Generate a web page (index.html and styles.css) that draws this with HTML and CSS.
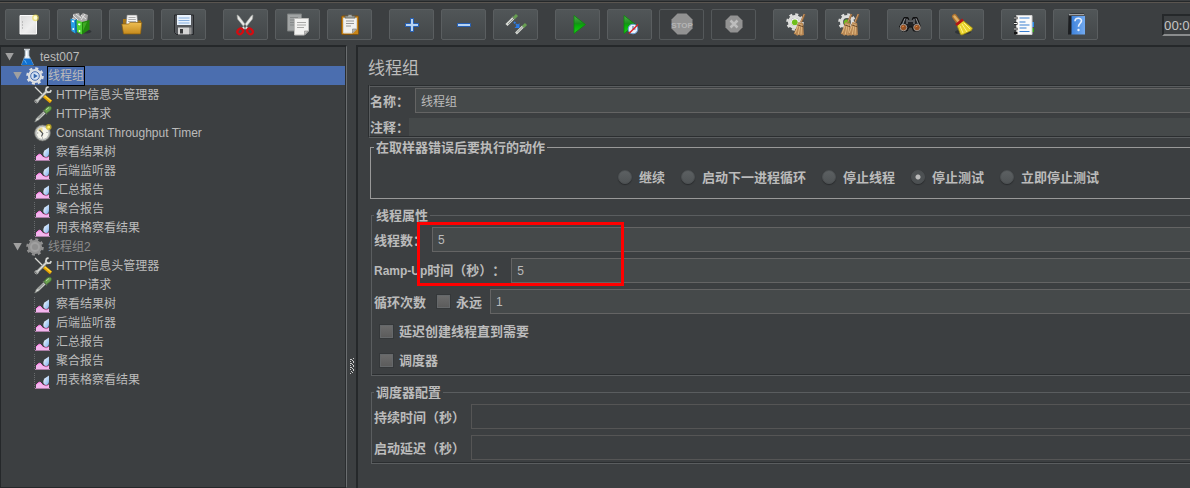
FILE: index.html
```html
<!DOCTYPE html>
<html lang="zh-CN">
<head>
<meta charset="utf-8">
<title>线程组</title>
<link rel="stylesheet" href="styles.css">
</head>
<body>
<svg class="defs" aria-hidden="true">
  <defs>
    <linearGradient id="g-green" x1="0" y1="0" x2="0" y2="1"><stop offset="0" stop-color="#4fae4a"/><stop offset=".45" stop-color="#17901a"/><stop offset=".55" stop-color="#08ac08"/><stop offset="1" stop-color="#18d218"/></linearGradient>
    <linearGradient id="g-folder" x1="0" y1="0" x2="0" y2="1"><stop offset="0" stop-color="#edbd52"/><stop offset="1" stop-color="#c58a1c"/></linearGradient>
    <linearGradient id="g-blue" x1="0" y1="0" x2="1" y2="0"><stop offset="0" stop-color="#3f83dc"/><stop offset="1" stop-color="#72aaf0"/></linearGradient>
    <linearGradient id="g-paper" x1="0" y1="0" x2="1" y2="1"><stop offset="0" stop-color="#d8d8d8"/><stop offset=".6" stop-color="#efefef"/><stop offset="1" stop-color="#dcdcdc"/></linearGradient>
    <linearGradient id="g-drop" x1="0" y1="0" x2="1" y2="1"><stop offset="0" stop-color="#ffffff"/><stop offset="1" stop-color="#7db2ee"/></linearGradient>
  </defs>
  <symbol id="i-tools" viewBox="0 0 18 18">
    <path d="M1 1l9 9" stroke="#d9d9d4" stroke-width="1.3"/>
    <path d="M10 10l7 6" stroke="#e3a000" stroke-width="3.4"/><path d="M10.500 9.700l6.500 5.300" stroke="#ffd73a" stroke-width="1.200"/>
    <path d="M2.500 15.500L13 5" stroke="#8f938f" stroke-width="3"/><path d="M2.500 15.500L13 5" stroke="#dcdedb" stroke-width="1.400"/>
    <path d="M14.600.9l-2 .8-.8 2.600 1.800 2.100 2.600-.4 1-1.900" fill="none" stroke="#d5d7d4" stroke-width="1.800"/>
    <path d="M14.500 3.500L16 1.500" stroke="#3c3f41" stroke-width="1.500"/>
    <circle cx="2.600" cy="15.200" r="1.700" fill="none" stroke="#b8bab7"/>
  </symbol>
  <symbol id="i-dropper" viewBox="0 0 18 18">
    <path d="M.8 17l1.700-3.800L11 5l2 2-8.500 8z" fill="#dfe2dd" stroke="#858985" stroke-width=".8"/>
    <path d="M4 13.500l6-6" stroke="#5c605c"/>
    <path d="M9 5.200l4 4" stroke="#6c706b" stroke-width="1.500"/>
    <path d="M10 5.500C12 2 14.500.8 16.300 1.200c1.700.5 1.500 2.900-.1 4.400L12.500 8.500z" fill="#6ba050" stroke="#40702f" stroke-width=".7"/>
    <path d="M12 4.800l3-2.300" stroke="#b6db9e"/>
  </symbol>
  <symbol id="i-timer" viewBox="0 0 18 18">
    <circle cx="8.500" cy="9" r="7.900" fill="#b9bcba" stroke="#73746f" stroke-width=".7"/>
    <circle cx="8.500" cy="9" r="6" fill="#f5f5ed"/><path d="M8.500 9V3.200A5.800 5.800 0 0 0 3.500 6z" fill="#e8d993"/>
    <path d="M5.500 6l3.300 3.500-1.300 3" fill="none" stroke="#55585a" stroke-width="1.200"/>
    <path d="M12.500 8.500l1 0M8.500 13.500v1M3.200 9h1" stroke="#888"/>
    <circle cx="14.700" cy="3" r="2.900" fill="#e5c81f" opacity=".7"/><circle cx="14.700" cy="3" r="1.500" fill="#fff26a"/>
  </symbol>
  <symbol id="i-chart" viewBox="0 0 18 18">
    <path d="M.5 2v16" stroke="#686b6d" stroke-dasharray="1 1"/><path d="M1 17.500h15" stroke="#aa7ea6"/>
    <path d="M2 17v-3l2-2 2-1 2 2 1.500 1 2.500.5 3-1V17z" fill="#f3b5ee"/>
    <path d="M2 14l2-2 2-1 2.500 2.500" fill="none" stroke="#ff7be6"/>
    <path d="M15 4.500L10.500 7.500c-2.200 3-1 6.500 1.300 6.500 2.400 0 3.200-2 3.200-4z" fill="url(#g-drop)"/>
    <path d="M10 13.500l2 1.500 3-1.500" fill="none" stroke="#c42a83" stroke-dasharray="1 1"/>
  </symbol>
  <symbol id="i-broom" viewBox="0 0 12 22">
    <path d="M10.800 1L7.500 9" stroke="#8f6237" stroke-width="2"/><path d="M10.500 1L7.300 8.700" stroke="#d3a370" stroke-width=".8"/>
    <path d="M5 8.500l4.500 1.300.7 11.200-3 .8-1.700-1-1.700.9L2 20.400.500 20z" fill="#b88753"/>
    <path d="M5.500 10l-3.500 9M6.800 10.500l-2 10M8 11l-.5 9.500" stroke="#e4bd85" stroke-width=".9"/>
    <path d="M4 11.300l5.700 1.900" stroke="#6b4927" stroke-width=".9"/>
  </symbol>
  <symbol id="i-cog" viewBox="0 0 18 18">
    <circle cx="9" cy="9" r="7.600" fill="none" stroke="currentColor" stroke-width="2.400" stroke-dasharray="2.990 2.980"/>
    <circle cx="9" cy="9" r="5.500" fill="none" stroke="currentColor" stroke-width="3.200"/>
  </symbol>
</svg>

<header class="toolbar" role="toolbar" aria-label="工具栏">
  <div class="group">
    <button class="tool" type="button" aria-label="新建"><svg viewBox="0 0 24 24"><path d="M4 2.500h16.500V21H4z" fill="url(#g-paper)" stroke="#fafafa"/><path d="M6 9h1M6 12h1M6 15h1" stroke="#999"/><circle cx="19.500" cy="4.800" r="3.400" fill="#ead94f" opacity=".65"/><circle cx="19.500" cy="4.800" r="2" fill="#fffbd0"/></svg></button>
    <button class="tool" type="button" aria-label="模板"><svg viewBox="0 0 24 24"><ellipse cx="17" cy="18.500" rx="6.500" ry="2" fill="#303437"/><path d="M5 1l6-1 1 3 3-3 5 2-1 7-7 2-7-4z" fill="#aaa"/><path d="M5 2l5 5M8 1l5 4M13 2l5 4M4 5l5 3M17 1l-4 6" stroke="#e4e4e4"/><path d="M2.500 5.500l5 1.500v13.500L3.500 18z" fill="#27a1e8"/><path d="M7 7l2-1v13l-1.500 1.500z" fill="#0968ae"/><path d="M8.500 7l5.500 2v12.500L9 19z" fill="#4fd136"/><path d="M14 9l7.500-2v9.500L14 21.500z" fill="#21870e"/><path d="M15 10l4-1-4 9z" fill="#3faa24"/><path d="M4 8l2 .6M10.300 11l2 .7" stroke="#fff" stroke-width="1.800"/><circle cx="5.300" cy="16" r=".9" fill="#fff"/><circle cx="11.500" cy="18" r=".9" fill="#fff"/></svg></button>
    <button class="tool" type="button" aria-label="打开"><svg viewBox="0 0 24 24"><path d="M3 9V6h5l1.500 1.500H21V20H4z" fill="#a87616"/><path d="M7 2h10l1 9.500H6z" fill="#f4f4f4" stroke="#777" stroke-width=".6"/><path d="M8.500 4.500h7M8.300 6.500h7.500M8 8.500h8" stroke="#999" stroke-width=".8"/><path d="M1.800 11h6.500L10 9.500h11.800L20.500 21H3.500z" fill="url(#g-folder)" stroke="#8b5f0e" stroke-width=".7"/></svg></button>
    <button class="tool" type="button" aria-label="保存"><svg viewBox="0 0 24 24"><path d="M2.500 2h19v19.500h-17l-2-2z" fill="#55585c" stroke="#25272a"/><path d="M5 2h14v10H5z" fill="#e9f2fc"/><path d="M6.500 5h11M6.500 7.500h11M6.500 10h11" stroke="#86aede"/><path d="M6 14.500h11.500v7H6z" fill="#d4d4d4"/><path d="M8 16h3v4.500H8z" fill="#36383a"/><path d="M18 14.500h1.500v7H18z" fill="#929292"/></svg></button>
  </div>
  <div class="group">
    <button class="tool" type="button" aria-label="剪切"><svg viewBox="0 0 24 24"><path d="M3 2c1 0 2 1 3 2.500L14 15l-2 1.500L3.500 6zM19 2c-1 0-2 1-3 2.500L8 15l2 1.500L18.500 6z" fill="#e9e9e7" stroke="#999c99" stroke-width=".6"/><circle cx="11" cy="13" r=".8" fill="#666"/><ellipse cx="6.200" cy="18.400" rx="2.500" ry="3.100" transform="rotate(42 6.200 18.400)" fill="none" stroke="#d40b10" stroke-width="2.300"/><ellipse cx="16" cy="18.400" rx="2.500" ry="3.100" transform="rotate(-42 16 18.400)" fill="none" stroke="#d40b10" stroke-width="2.300"/></svg></button>
    <button class="tool" type="button" aria-label="复制"><svg viewBox="0 0 24 24"><path d="M1.500 1h14v17h-14z" fill="#a1a4a4" stroke="#7d8080"/><path d="M4 4.500h8M4 7h8M4 9.500h8M4 12h5" stroke="#858888"/><path d="M8.500 5.500h14V18l-4 4h-10z" fill="#f2f2f0" stroke="#bdbdbb"/><path d="M11 9.500h9M11 12h9M11 14.500h7" stroke="#a8a8a6"/><path d="M22 18h-3.500v3.800z" fill="#c1c1be" stroke="#888" stroke-width=".6"/></svg></button>
    <button class="tool" type="button" aria-label="粘贴"><svg viewBox="0 0 24 24"><rect x="3.500" y="3" width="17" height="18.500" rx="1" fill="#c7851a" stroke="#83530d"/><path d="M5.500 5h13v11l-4 4h-9z" fill="#f1f1ef" stroke="#d8d8d5"/><path d="M18.500 16l-4 0v4z" fill="#b9b9b5" stroke="#777" stroke-width=".6"/><path d="M8 8h8M8 10.500h8M8 13h5" stroke="#969696"/><path d="M7 5V3h3V1.500h4V3h3v2z" fill="#a5a8a4" stroke="#5a5d59" stroke-width=".8"/></svg></button>
  </div>
  <div class="group">
    <button class="tool" type="button" aria-label="展开"><svg viewBox="0 0 24 24"><path d="M10.500 5.500h3v5h5v3h-5v5h-3v-5h-5v-3h5z" fill="#b7d3f2" stroke="#245fb5"/></svg></button>
    <button class="tool" type="button" aria-label="收起"><svg viewBox="0 0 24 24"><path d="M5.500 10.500h13v3h-13z" fill="#b7d3f2" stroke="#245fb5"/></svg></button>
    <button class="tool" type="button" aria-label="切换"><svg viewBox="0 0 24 24"><path d="M2.500 12l7.500-7.500" stroke="#d9dcd7" stroke-width="3"/><path d="M4 11l6-6" stroke="#8f938e"/><path d="M8.500 4l3 3" stroke="#53654c"/><path d="M10 5l3-3" stroke="#679e51" stroke-width="3"/><path d="M12 20.500l7-7" stroke="#d9dcd7" stroke-width="2.600"/><path d="M13 19.500l6-6" stroke="#8f938e"/><path d="M19 14l3-3" stroke="#679e51" stroke-width="3"/><path d="M10 9l4 4" stroke="#2f7be0" stroke-width="2" stroke-dasharray="2 1"/><path d="M15.500 10v5h-5z" fill="#287be9"/></svg></button>
  </div>
  <div class="group">
    <button class="tool" type="button" aria-label="启动"><svg viewBox="0 0 24 24"><path d="M8 2.500v18l11.500-9z" fill="url(#g-green)" stroke="#0c860c" stroke-width=".8"/></svg></button>
    <button class="tool" type="button" aria-label="不停顿启动"><svg viewBox="0 0 24 24"><path d="M6 2.500v18l11.500-9z" fill="url(#g-green)" stroke="#0c860c" stroke-width=".8"/><circle cx="15" cy="16" r="4.800" fill="#e9f2fb" stroke="#699ed6"/><path d="M15 13v3h2.500" fill="none" stroke="#3e618c"/><path d="M11 20.500l9-9" stroke="#df2222" stroke-width="1.500"/></svg></button>
    <button class="tool" type="button" aria-label="停止" disabled><svg viewBox="0 0 24 24"><path d="M7.500.5h9l6 6v9l-6 6h-9l-6-6v-9z" fill="#929292"/><text class="stop-text" x="12" y="15" text-anchor="middle">STOP</text></svg></button>
    <button class="tool" type="button" aria-label="关闭" disabled><svg viewBox="0 0 24 24"><path d="M8.500 2.500h7l5 5v7l-5 5h-7l-5-5v-7z" fill="#929292"/><path d="M8.500 7.500l7 7m0-7l-7 7" stroke="#bdbdbd" stroke-width="2.500"/></svg></button>
  </div>
  <div class="group">
    <button class="tool" type="button" aria-label="清除"><svg viewBox="0 0 24 24"><use href="#i-cog" x="2" y="0" width="18" height="18" color="#dededc"/><circle cx="11" cy="9" r="4" fill="#f3f3f0"/><circle cx="10.800" cy="9.300" r="2.900" fill="#6fbe1b"/><use href="#i-broom" x="9" y="0" width="13" height="23"/></svg></button>
    <button class="tool" type="button" aria-label="清除全部"><svg viewBox="0 0 24 24"><use href="#i-cog" x="2" y="0" width="18" height="18" color="#dededc"/><circle cx="10.800" cy="9.300" r="2.900" fill="#6fbe1b"/><use href="#i-broom" x="4" y="0" width="13" height="23"/><use href="#i-broom" x="11" y="0" width="13" height="23"/></svg></button>
  </div>
  <div class="group">
    <button class="tool" type="button" aria-label="查找"><svg viewBox="0 0 24 24"><path d="M6 4.500h4l1 3h3l1-3h4l3.500 9-2 4.500h-5L14 14h-3l-2 4H4l-2.500-4z" fill="#202124" stroke="#111"/><path d="M7 5.500l-3 7M10 8h5M18 5.500l3 7M9 6v5M16 6v5" stroke="#92969a"/><circle cx="5.500" cy="14.500" r="3.300" fill="#965124" stroke="#aaa" stroke-width=".8"/><circle cx="19" cy="14.500" r="3.300" fill="#965124" stroke="#aaa" stroke-width=".8"/><path d="M4 14l2-1M17.500 14l2-1" stroke="#e58b45"/></svg></button>
    <button class="tool" type="button" aria-label="重置查找"><svg viewBox="0 0 24 24"><ellipse cx="13" cy="19" rx="8" ry="2.500" fill="#303437"/><path d="M4.500 3.500l5 7" stroke="#aa7130" stroke-width="5" stroke-linecap="round"/><path d="M4.500 3.500l4 5" stroke="#dfb064" stroke-width="2.500" stroke-linecap="round"/><path d="M7 12.500l6-5 9.500 7.500-1 2.500L12 22l-1.500-.5z" fill="#e9d32c" stroke="#958516" stroke-width=".8"/><path d="M10 13l3 7M12 11l5 8M14 10l6 6" stroke="#fff28a"/><path d="M6 12l7-5.500" stroke="#b51515" stroke-width="2.800"/></svg></button>
  </div>
  <div class="group">
    <button class="tool" type="button" aria-label="函数助手"><svg viewBox="0 0 24 24"><path d="M18 9h4v5h-4z" fill="#2b8ae8"/><path d="M18 15h4v4h-4z" fill="#2d9c12"/><path d="M4.500 2.500h15.500v19H4.500z" fill="#fafafa" stroke="#cfcfcf"/><path d="M7.500 5h10M7.500 9h6M7.500 12h10M7.500 15h7M7.500 18.500h10" stroke="#397fd0"/><path d="M2 5h3.500M2 10.500h3.500M2 16h3.500M2 20h3.500" stroke="#151515" stroke-width="2.400"/><path d="M2 5h3M2 10.500h3M2 16h3" stroke="#eee"/></svg></button>
    <button class="tool" type="button" aria-label="帮助"><svg viewBox="0 0 24 24"><path d="M4.500 2l2-1.500H20v2L7 21.500H4z" fill="#1d1f22"/><path d="M5 1.800h15" stroke="#d5d8db"/><path d="M7.500 3H21v18.500H7.500z" fill="url(#g-blue)"/><path d="M11 8.300c0-4 6.500-4 6.500-.5 0 2.500-3 2.500-3 6" fill="none" stroke="#e8f1fd" stroke-width="1.600"/><circle cx="14.500" cy="17" r="1.200" fill="#e8f1fd"/></svg></button>
  </div>
  <output class="timer">00:00:00</output>
</header>

<div class="workspace">
  <nav class="tree" aria-label="测试计划">
    <div class="node root"><span class="arrow"></span>
      <svg class="icon" viewBox="0 0 18 18"><path d="M7 1.500h4v6l4.500 9.500H3.500L7 7.500z" fill="#e4edf5" stroke="#93a1ac" stroke-width=".8"/><path d="M6 10.500h6.500l3 6.500H3.500z" fill="#1271d1"/><path d="M6.500 12l2 3.500" stroke="#62b5fa"/><path d="M6 1.500h6" stroke="#c8ced3" stroke-width="1.500"/><path d="M8.500 3v6" stroke="#fff"/></svg>
      <span class="name">test007</span></div>
    <div class="node branch selected"><span class="arrow"></span>
      <svg class="icon" viewBox="0 0 18 18"><use href="#i-cog" width="18" height="18" color="#dcdfe2"/><circle cx="9" cy="9" r="4.300" fill="#d5e2f3" stroke="#4b6eaf"/><path d="M7.700 6.500v5l4-2.500z" fill="#3567ad"/></svg>
      <span class="name">线程组</span></div>
    <ul>
      <li class="node"><svg class="icon"><use href="#i-tools"/></svg><span class="name">HTTP信息头管理器</span></li>
      <li class="node"><svg class="icon"><use href="#i-dropper"/></svg><span class="name">HTTP请求</span></li>
      <li class="node"><svg class="icon"><use href="#i-timer"/></svg><span class="name">Constant Throughput Timer</span></li>
      <li class="node"><svg class="icon"><use href="#i-chart"/></svg><span class="name">察看结果树</span></li>
      <li class="node"><svg class="icon"><use href="#i-chart"/></svg><span class="name">后端监听器</span></li>
      <li class="node"><svg class="icon"><use href="#i-chart"/></svg><span class="name">汇总报告</span></li>
      <li class="node"><svg class="icon"><use href="#i-chart"/></svg><span class="name">聚合报告</span></li>
      <li class="node"><svg class="icon"><use href="#i-chart"/></svg><span class="name">用表格察看结果</span></li>
    </ul>
    <div class="node branch off"><span class="arrow"></span>
      <svg class="icon" viewBox="0 0 18 18"><use href="#i-cog" width="18" height="18" color="#919191"/><circle cx="9" cy="9" r="5" fill="#a0a0a0"/><circle cx="9" cy="9" r="3" fill="#8f8f8f"/></svg>
      <span class="name">线程组2</span></div>
    <ul>
      <li class="node"><svg class="icon"><use href="#i-tools"/></svg><span class="name">HTTP信息头管理器</span></li>
      <li class="node"><svg class="icon"><use href="#i-dropper"/></svg><span class="name">HTTP请求</span></li>
      <li class="node"><svg class="icon"><use href="#i-chart"/></svg><span class="name">察看结果树</span></li>
      <li class="node"><svg class="icon"><use href="#i-chart"/></svg><span class="name">后端监听器</span></li>
      <li class="node"><svg class="icon"><use href="#i-chart"/></svg><span class="name">汇总报告</span></li>
      <li class="node"><svg class="icon"><use href="#i-chart"/></svg><span class="name">聚合报告</span></li>
      <li class="node"><svg class="icon"><use href="#i-chart"/></svg><span class="name">用表格察看结果</span></li>
    </ul>
  </nav>

  <div class="splitter">
    <svg class="grip" viewBox="0 0 4 16" shape-rendering="crispEdges"><path d="M3 .5h1M1 1.500h1M2 2.500h1M0 3.500h1M3 4.500h1M1 5.500h1M2 6.500h1M0 7.500h1M3 8.500h1M1 9.500h1M2 10.500h1M0 11.500h1M3 12.500h1M1 13.500h1M2 14.500h1M0 15.500h1M0 1.500h1M3 3.500h1M0 5.500h1M3 7.500h1M0 9.500h1M3 11.500h1" stroke="#ccc"/></svg>
  </div>

  <main class="panel">
    <h1>线程组</h1>
    <div class="identity">
      <div class="row"><label for="name">名称：</label><input class="text" id="name" type="text" value="线程组"></div>
      <div class="row comment"><label for="comment">注释：</label><input class="text" id="comment" type="text"></div>
    </div>

    <fieldset class="actions">
      <legend>在取样器错误后要执行的动作</legend>
      <div class="radios">
        <label><input type="radio" name="action">继续</label>
        <label><input type="radio" name="action">启动下一进程循环</label>
        <label><input type="radio" name="action">停止线程</label>
        <label><input type="radio" name="action" checked>停止测试</label>
        <label><input type="radio" name="action">立即停止测试</label>
      </div>
    </fieldset>

    <fieldset class="etched">
      <legend>线程属性</legend>
      <div class="fields">
        <div class="row"><label for="threads">线程数：</label><input class="text" id="threads" type="text" value="5"></div>
        <div class="row"><label for="ramp"><span class="latin">Ramp-Up</span>时间（秒）：</label><input class="text" id="ramp" type="text" value="5"></div>
        <div class="row"><label for="loops">循环次数</label><label class="check forever"><input type="checkbox">永远</label><input class="text" id="loops" type="text" value="1"></div>
      </div>
      <div class="options">
        <label class="check"><input type="checkbox">延迟创建线程直到需要</label>
        <label class="check"><input type="checkbox">调度器</label>
      </div>
      <div class="highlight"></div>
    </fieldset>

    <fieldset class="etched">
      <legend>调度器配置</legend>
      <div class="fields">
        <div class="row"><label for="duration">持续时间（秒）</label><input class="text" id="duration" type="text" disabled></div>
        <div class="row"><label for="delay">启动延迟（秒）</label><input class="text" id="delay" type="text" disabled></div>
      </div>
    </fieldset>
  </main>
</div>
</body>
</html>
```

FILE: styles.css
```css
* { box-sizing: border-box; }

body {
  margin: 0;
  height: 100vh;
  display: flex;
  flex-direction: column;
  overflow: hidden;
  background: #3c3f41;
  color: #bbbbbb;
  font: 12px/18px "Liberation Sans", "Noto Sans CJK SC", sans-serif;
}

.defs { position: absolute; width: 0; height: 0; }

/* Toolbar */
.toolbar {
  flex: none;
  display: flex;
  align-items: center;
  gap: 17px;
  height: 45px;
  padding: 4px 0 0 5px;
  background: linear-gradient(#3c3f41 1px, #25282a 1px, #25282a 2px, #5a5550 2px, #5a5550 3px, #3c3f41 3px);
}
.group { display: flex; flex: none; gap: 7px; }
.tool {
  display: grid;
  place-items: center;
  width: 45px;
  height: 31px;
  padding: 0;
  border: 1px solid #5a5e60;
  border-radius: 2px;
  background: linear-gradient(#515658, #434749);
}
.tool:disabled { background: none; border-color: #54585a; }
.tool svg { width: 24px; height: 24px; }
.stop-text { font: bold 8px "Liberation Sans", sans-serif; fill: #b5b5b5; }
.timer {
  flex: none;
  margin-left: 47px;
  border: 2px solid;
  border-color: #25282a #8a8c8d #8a8c8d #25282a;
  font: 13px/18px "Noto Sans", sans-serif;
  color: #c4c4c4;
}

/* Workspace */
.workspace {
  flex: 1;
  min-height: 0;
  display: grid;
  grid-template-columns: 347px 9px minmax(0, 1fr);
}
.tree {
  border: 1px solid #25282a;
  border-top-width: 2px;
  border-right-color: #6b6e70;
  box-shadow: inset -1px 0 #2b2e30;
  padding-right: 1px;
  overflow: hidden;
}
.tree ul { list-style: none; margin: 0; padding: 0 0 0 33px; }
.node { display: flex; align-items: center; height: 19px; white-space: nowrap; }
.root { padding-left: 4px; }
.branch { padding-left: 12px; }
.selected { background: #4b6eaf; }
.selected .name { outline: 1px solid #000; }
.off .name { color: #8c8c8c; }
.icon { flex: none; width: 18px; height: 18px; margin-right: 4px; }
.arrow {
  flex: none;
  width: 9px;
  height: 8px;
  margin-right: 4px;
  background: #a0a0a0;
  clip-path: polygon(0 0, 100% 0, 50% 100%);
}
.splitter { display: flex; justify-content: center; padding-top: 313px; }
.grip { width: 4px; height: 16px; }

/* Editor */
.panel {
  border: solid #25282a;
  border-width: 2px 0 0 2px;
  padding: 8px 0 0 10px;
  overflow: hidden;
}
h1 { margin: 0 0 6px; font: 17px/24px "Noto Sans CJK SC", sans-serif; }
label, legend {
  font: bold 13px/18px "Noto Sans CJK SC", sans-serif;
  text-spacing-trim: space-all;
  white-space: nowrap;
}
.latin { font: bold 12px/18px "Liberation Sans", sans-serif; }
.row { display: flex; align-items: center; gap: 6px; }
.text {
  flex: 1;
  min-width: 0;
  height: 25px;
  padding: 0 5px;
  border: 1px solid #646464;
  border-right: 0;
  background: #45494a;
  color: #bbbbbb;
  font: inherit;
}
.text:disabled { background: #3c3f41; border-color: #555555; }

.identity {
  display: grid;
  gap: 5px;
  margin: 0 0 1px 1px;
  border: 1px solid #2b2e30;
  border-right: 0;
  box-shadow: -1px 0 #2b2e30, inset 0 1px #5a5d5f, 0 1px #5a5d5f;
  border-left-color: #5a5d5f;
  padding-top: 2px;
}
.comment { gap: 0; }
.comment .text { height: 18px; border: 0; }

fieldset { margin: 0 0 7px 2px; min-width: 0; }
legend { padding: 0 2px; }
.actions { border: 1px solid #999999; border-right: 0; padding: 12px 0 12px 3px; }
.radios { display: flex; gap: 16px; padding-left: 244px; }
.radios label, .check { display: flex; align-items: center; gap: 7px; }
.check { gap: 6px; }

.etched {
  position: relative;
  margin-left: 3px;
  border: 1px solid #5a5d5f;
  border-right: 0;
  box-shadow: inset 0 -1px #2b2e30;
  padding: 3px 0 3px 2px;
}
.fields { display: grid; gap: 6px; }
.options { display: grid; gap: 11px; padding: 8px 0 3px 6px; }
.forever { margin: 0 2px 0 5px; }

input[type="radio"], input[type="checkbox"] {
  appearance: none;
  flex: none;
  width: 14px;
  height: 14px;
  margin: 0;
  border: 1px solid #4c5052;
  background: linear-gradient(#5c6062, #505456);
  box-shadow: 0 1px 1px #292b2d;
}
input[type="radio"] { border-radius: 50%; }
input[type="radio"]:checked { background: radial-gradient(circle, #bbbbbb 2px, #4d5153 3px); }
input[type="checkbox"] { width: 13px; height: 13px; border-color: #65686a; background: linear-gradient(#6b6b6b, #5c5c5c); box-shadow: 0 0 0 1px #35383a; }

/* Marker drawn around the thread count and ramp-up fields */
.highlight {
  position: absolute;
  left: 45px;
  top: -2px;
  width: 207px;
  height: 64px;
  border: 3px solid #ff0000;
  pointer-events: none;
}
```
